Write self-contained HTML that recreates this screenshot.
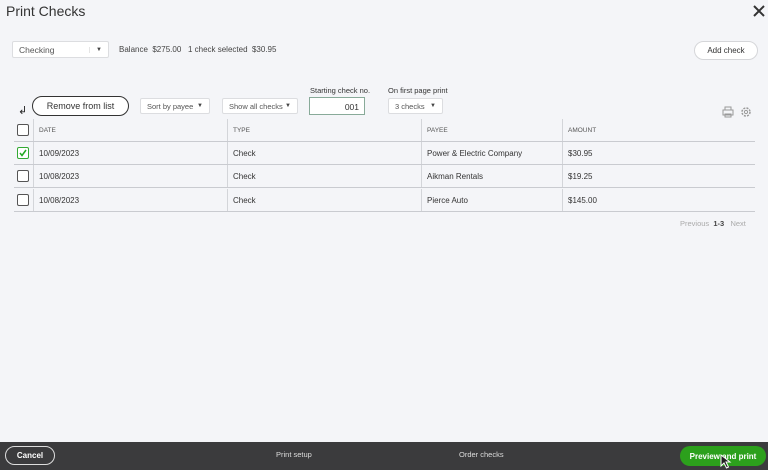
<!DOCTYPE html><html><head><style>
*{box-sizing:border-box;margin:0;padding:0}
body{width:768px;height:470px;background:#f4f5f8;font-family:"Liberation Sans",sans-serif;color:#333;position:relative;overflow:hidden;font-size:8px}
.a{position:absolute}
.sel{position:absolute;background:#fff;border:1px solid #dcdde0;border-radius:2px;font-size:8px;color:#555;padding:0 6px;display:flex;align-items:center;justify-content:space-between}
.tri{font-size:6px;color:#444}
.row{position:absolute;left:14px;width:741px;border-bottom:1px solid #c9cbd0;height:23px}
.cell{position:absolute;top:0;height:100%;display:flex;align-items:center;font-size:8px;color:#333;border-left:1px solid #d3d5d9;padding-left:5px}
.cb{position:absolute;left:3px;top:5px;width:12px;height:12px;border:1.3px solid #555;border-radius:2px;background:#fff}
.h .cell{font-size:6.5px;color:#555}
</style></head><body>
<div class="a" style="left:6px;top:3px;font-size:14px;color:#333">Print Checks</div>
<svg class="a" style="left:752px;top:4px" width="14" height="14"><path d="M2 2L12 12M12 2L2 12" stroke="#333" stroke-width="2"/></svg>
<div class="sel" style="left:12px;top:41px;width:97px;height:17px;font-size:8.5px">Checking<span class="tri" style="margin-left:auto;padding-left:6px;border-left:1px solid #e5e5e5">▼</span></div>
<div class="a" style="left:119px;top:45px;font-size:8px;color:#444">Balance&nbsp; $275.00 &nbsp;&nbsp;1 check selected&nbsp; $30.95</div>
<div class="a" style="left:694px;top:41px;width:64px;height:19px;border:1px solid #d5d6d9;border-radius:10px;background:#fff;font-size:8px;display:flex;align-items:center;justify-content:center;color:#333">Add check</div>
<div class="a" style="left:18px;top:104px;font-size:11px;color:#222">↲</div>
<div class="a" style="left:32px;top:96px;width:97px;height:20px;border:1.3px solid #333;border-radius:10px;background:#fff;font-size:9px;display:flex;align-items:center;justify-content:center;color:#333">Remove from list</div>
<div class="sel" style="left:140px;top:98px;width:70px;height:16px;font-size:7.5px">Sort by payee<span class="tri">▼</span></div>
<div class="sel" style="left:222px;top:98px;width:76px;height:16px;font-size:7.5px">Show all checks<span class="tri">▼</span></div>
<div class="a" style="left:310px;top:86px;font-size:7.5px;color:#333">Starting check no.</div>
<div class="a" style="left:309px;top:97px;width:56px;height:18px;border:1px solid #8a9;background:#fff;font-size:8.5px;text-align:right;padding:4px 5px 0 0;color:#333">001</div>
<div class="a" style="left:388px;top:86px;font-size:7.5px;color:#333">On first page print</div>
<div class="sel" style="left:388px;top:98px;width:55px;height:16px;font-size:7.5px">3 checks<span class="tri">▼</span></div>
<svg class="a" style="left:722px;top:106px" width="12" height="12"><rect x="3" y="1" width="6" height="3" fill="none" stroke="#999"/><rect x="1" y="4" width="10" height="5" fill="none" stroke="#999"/><rect x="3" y="8" width="6" height="3" fill="none" stroke="#999"/></svg>
<svg class="a" style="left:740px;top:106px" width="12" height="12"><circle cx="6" cy="6" r="4" fill="none" stroke="#999" stroke-width="1.5" stroke-dasharray="2 1.2"/><circle cx="6" cy="6" r="1.6" fill="none" stroke="#999"/></svg>
<div class="row h" style="top:119px;height:23px"><div class="cb" style="top:5px"></div><div class="cell" style="left:19px">DATE</div><div class="cell" style="left:213px">TYPE</div><div class="cell" style="left:407px">PAYEE</div><div class="cell" style="left:548px">AMOUNT</div></div>
<div class="row" style="top:142px"><div class="cb" style="border-color:#3a3"><svg width="10" height="10" style="position:absolute;left:0;top:0"><path d="M2 5l2 2.5L8 2" stroke="#2a2" stroke-width="1.5" fill="none"/></svg></div><div class="cell" style="left:19px">10/09/2023</div><div class="cell" style="left:213px">Check</div><div class="cell" style="left:407px">Power &amp; Electric Company</div><div class="cell" style="left:548px">$30.95</div></div>
<div class="row" style="top:165px"><div class="cb"></div><div class="cell" style="left:19px">10/08/2023</div><div class="cell" style="left:213px">Check</div><div class="cell" style="left:407px">Aikman Rentals</div><div class="cell" style="left:548px">$19.25</div></div>
<div class="row" style="top:189px"><div class="cb"></div><div class="cell" style="left:19px">10/08/2023</div><div class="cell" style="left:213px">Check</div><div class="cell" style="left:407px">Pierce Auto</div><div class="cell" style="left:548px">$145.00</div></div>
<div class="a" style="left:680px;top:219px;font-size:7.5px;color:#aaa">Previous&nbsp; <b style="color:#444">1-3</b>&nbsp;&nbsp; Next</div>
<div class="a" style="left:0;top:442px;width:768px;height:28px;background:#3b3b3d"></div>
<div class="a" style="left:5px;top:446px;width:50px;height:19px;border:1px solid #ddd;border-radius:10px;color:#fff;font-size:8px;font-weight:bold;display:flex;align-items:center;justify-content:center">Cancel</div>
<div class="a" style="left:276px;top:450px;color:#ddd;font-size:7.5px">Print setup</div>
<div class="a" style="left:459px;top:450px;color:#ddd;font-size:7.5px">Order checks</div>
<div class="a" style="left:680px;top:446px;width:86px;height:20px;background:#2ca01c;border-radius:10px;color:#fff;font-size:8px;font-weight:bold;display:flex;align-items:center;justify-content:center">Preview and print</div>
<svg class="a" style="left:720px;top:454px" width="12" height="16"><path d="M1 1L1 12L4 9L6.5 14L8.5 13L6 8L10 8Z" fill="#222" stroke="#fff" stroke-width="1"/></svg>
</body></html>
